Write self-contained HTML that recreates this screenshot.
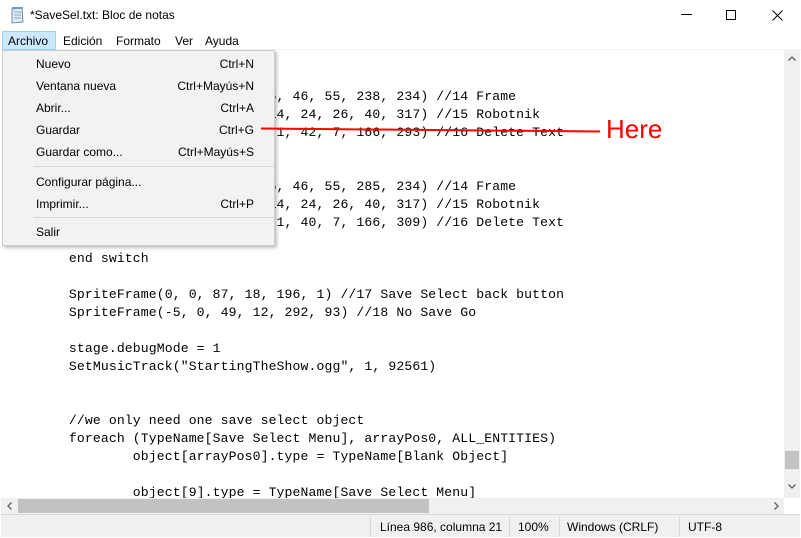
<!DOCTYPE html>
<html><head><meta charset="utf-8"><style>
*{margin:0;padding:0;box-sizing:border-box}
body{width:801px;height:538px;overflow:hidden;background:#fff;font-family:"Liberation Sans",sans-serif;position:relative}
.title{position:absolute;left:0;top:0;width:801px;height:31px;background:#fff;font-size:12px;color:#000}
.title .t{position:absolute;left:30px;top:8px}
.menubar{position:absolute;left:0;top:31px;width:801px;height:19px;background:#fff;font-size:12px;border-bottom:1px solid #f0f0f0}
.menubar span{position:absolute;top:3px}
.arch{position:absolute;left:2px;top:0;width:54px;height:19px;background:#cce8ff;border:1px solid #99d1ff}
.editor{position:absolute;left:0;top:50px;width:784px;height:448px;overflow:hidden;background:#fff}
pre{position:absolute;left:5px;top:2px;font-family:"Liberation Mono",monospace;font-size:13.12px;letter-spacing:0.12px;line-height:18px;color:#000}
.vs{position:absolute;left:784px;top:50px;width:16px;height:448px;background:#f0f0f0}
.hs{position:absolute;left:1px;top:498px;width:783px;height:16px;background:#f0f0f0}
.status{position:absolute;left:1px;top:514px;width:799px;height:23px;background:#f0f0f0;border-top:1px solid #d7d7d7;font-size:12px}
.status span{position:absolute;top:5px}
.sep{position:absolute;top:2px;width:1px;height:20px;background:#d7d7d7}
.menu{position:absolute;left:2px;top:50px;width:273px;height:196px;background:#f2f2f2;border:1px solid #cccccc;box-shadow:2px 2px 3px rgba(0,0,0,.25);font-size:12px}
.mi{position:absolute;left:33px;width:218px;height:16px}
.mi b{font-weight:normal;position:absolute;right:0;top:0}
.msep{position:absolute;left:31px;width:240px;height:1px;background:#d7d7d7}
</style></head><body>
<div class="editor"><pre>        if save.available == 1
          switch option
        SpriteFrame(-20, -25, 4, 5, 46, 55, 238, 234) //14 Frame
        SpriteFrame(-20, -25, 4, 14, 24, 26, 40, 317) //15 Robotnik
        SpriteFrame(-20, -25, 40, 1, 42, 7, 166, 293) //16 Delete Text
          else
          case 1
        SpriteFrame(-20, -25, 4, 5, 46, 55, 285, 234) //14 Frame
        SpriteFrame(-20, -25, 4, 14, 24, 26, 40, 317) //15 Robotnik
        SpriteFrame(-20, -25, 40, 1, 40, 7, 166, 309) //16 Delete Text
          end if
        end switch

        SpriteFrame(0, 0, 87, 18, 196, 1) //17 Save Select back button
        SpriteFrame(-5, 0, 49, 12, 292, 93) //18 No Save Go

        stage.debugMode = 1
        SetMusicTrack("StartingTheShow.ogg", 1, 92561)


        //we only need one save select object
        foreach (TypeName[Save Select Menu], arrayPos0, ALL_ENTITIES)
                object[arrayPos0].type = TypeName[Blank Object]

                object[9].type = TypeName[Save Select Menu]</pre></div>
<div class="vs">
<svg style="position:absolute;left:4px;top:6px" width="8" height="5"><path d="M0.5 4.5L4 1L7.5 4.5" stroke="#606060" stroke-width="1.3" fill="none"/></svg>
<div style="position:absolute;left:1px;top:401px;width:14px;height:18px;background:#c2c2c2"></div>
<svg style="position:absolute;left:4px;top:434px" width="8" height="5"><path d="M0.5 0.5L4 4L7.5 0.5" stroke="#606060" stroke-width="1.3" fill="none"/></svg>
</div>
<div class="hs">
<svg style="position:absolute;left:6px;top:4px" width="5" height="8"><path d="M4.5 0.5L1 4L4.5 7.5" stroke="#606060" stroke-width="1.3" fill="none"/></svg>
<div style="position:absolute;left:17px;top:1px;width:411px;height:14px;background:#c2c2c2"></div>
<svg style="position:absolute;left:773px;top:4px" width="5" height="8"><path d="M0.5 0.5L4 4L0.5 7.5" stroke="#606060" stroke-width="1.3" fill="none"/></svg>
</div>
<div class="status">
<div class="sep" style="left:369px"></div><span style="left:379px">Línea 986, columna 21</span>
<div class="sep" style="left:508px"></div><span style="left:517px">100%</span>
<div class="sep" style="left:558px"></div><span style="left:566px">Windows (CRLF)</span>
<div class="sep" style="left:678px"></div><span style="left:687px">UTF-8</span>
</div>
<div class="title">
<svg style="position:absolute;left:9px;top:6px" width="16" height="18"><path d="M3 3L13 2L14 16L3 17Z" fill="#dfeaf3" stroke="#6b8fb0"/><path d="M5 6h7M5 9h7M5 12h7" stroke="#8aa8c4"/><path d="M3 2h11" stroke="#6aa0d0" stroke-width="2"/></svg>
<span class="t">*SaveSel.txt: Bloc de notas</span>
<div style="position:absolute;left:681px;top:14px;width:11px;height:1px;background:#000"></div>
<div style="position:absolute;left:726px;top:10px;width:10px;height:10px;border:1px solid #000"></div>
<svg style="position:absolute;left:772px;top:10px" width="11" height="11"><path d="M0.5 0.5L10.5 10.5M10.5 0.5L0.5 10.5" stroke="#000"/></svg>
</div>
<div class="menubar">
<div class="arch"></div>
<span style="left:8px">Archivo</span><span style="left:63px">Edición</span><span style="left:116px">Formato</span><span style="left:175px">Ver</span><span style="left:205px">Ayuda</span>
</div>
<div class="menu">
<div class="mi" style="top:6px">Nuevo<b>Ctrl+N</b></div>
<div class="mi" style="top:28px">Ventana nueva<b>Ctrl+Mayús+N</b></div>
<div class="mi" style="top:50px">Abrir...<b>Ctrl+A</b></div>
<div class="mi" style="top:72px">Guardar<b>Ctrl+G</b></div>
<div class="mi" style="top:94px">Guardar como...<b>Ctrl+Mayús+S</b></div>
<div class="msep" style="top:115px"></div>
<div class="mi" style="top:124px">Configurar página...<b></b></div>
<div class="mi" style="top:146px">Imprimir...<b>Ctrl+P</b></div>
<div class="msep" style="top:166px"></div>
<div class="mi" style="top:174px">Salir</div>
</div>
<svg style="position:absolute;left:0;top:0" width="801" height="538"><path d="M261 128.5L600 131.5" stroke="#ff0000" stroke-width="2"/></svg>
<div style="position:absolute;left:606px;top:114px;font-size:26px;color:#ff0000;font-family:'Liberation Sans',sans-serif">Here</div>
</body></html>
